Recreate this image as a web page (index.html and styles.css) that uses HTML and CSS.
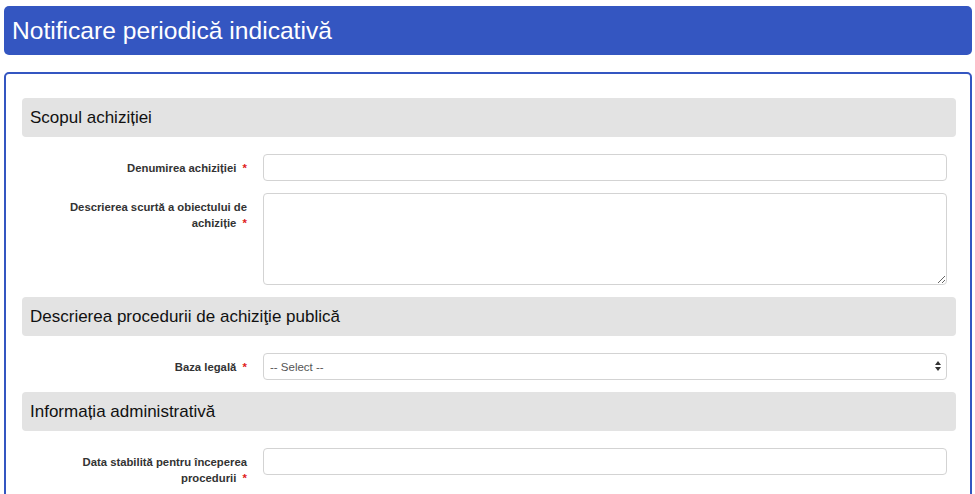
FILE: index.html
```html
<!DOCTYPE html>
<html lang="ro">
<head>
<meta charset="utf-8">
<title>Notificare periodică indicativă</title>
<link rel="stylesheet" href="styles.css">
</head>
<body>
<div class="page">
  <header class="page-header">
    <h1 class="page-title">Notificare periodică indicativă</h1>
  </header>
  <main class="card">
    <section class="section">
      <h2 class="section-title">Scopul achiziției</h2>
      <div class="form-row">
        <label class="form-label required" for="den">Denumirea achiziției</label>
        <div class="form-field"><input id="den" class="input" type="text"></div>
      </div>
      <div class="form-row">
        <label class="form-label required" for="desc">Descrierea scurtă a obiectului de achiziție</label>
        <div class="form-field"><textarea id="desc" class="input textarea"></textarea></div>
      </div>
    </section>
    <section class="section">
      <h2 class="section-title">Descrierea procedurii de achiziţie publică</h2>
      <div class="form-row">
        <label class="form-label required" for="baza">Baza legală</label>
        <div class="form-field select-wrap">
          <select id="baza" class="input select"><option>-- Select --</option></select>
          <svg class="select-arrows" width="8" height="12" viewBox="0 0 8 12"><path d="M4 1 L7 5 L1 5 Z M4 11 L7 7 L1 7 Z" fill="#333"/></svg>
        </div>
      </div>
    </section>
    <section class="section">
      <h2 class="section-title">Informația administrativă</h2>
      <div class="form-row">
        <label class="form-label required" for="data">Data stabilită pentru începerea procedurii</label>
        <div class="form-field"><input id="data" class="input" type="text"></div>
      </div>
    </section>
  </main>
</div>
</body>
</html>
```
FILE: styles.css
```css
* { box-sizing: border-box; }
html, body { margin: 0; padding: 0; background: #fff; }
body {
  font-family: "Liberation Sans", Arial, sans-serif;
  color: #333;
  overflow: hidden;
}
.page {
  padding: 6px 3px 0 4px;
}
.page-header {
  background: #3456c1;
  border-radius: 5px;
  height: 49px;
  display: flex;
  align-items: center;
  padding: 1px 8px 0;
}
.page-title {
  margin: 0;
  font-size: 24.6px;
  font-weight: 400;
  color: #fff;
}
.card {
  margin-top: 17px;
  border: 2px solid #3456c1;
  border-radius: 5px;
  padding: 24px 14px 40px 16px;
  min-height: 500px;
}
.section-title {
  margin: 0;
  background: #e3e3e3;
  border-radius: 4px;
  height: 39px;
  display: flex;
  align-items: center;
  padding: 0 8px;
  font-size: 17px;
  font-weight: 400;
  color: #111;
}
.section { margin-bottom: 12px; }
.section-title + .form-row { margin-top: 17px; }
.form-row {
  display: grid;
  grid-template-columns: 241px 1fr;
  margin-top: 12px;
}
.form-label {
  text-align: right;
  font-size: 11.3px;
  font-weight: 700;
  line-height: 16px;
  padding: 6px 16px 0 34px;
  color: #333;
}
.required::after {
  content: "\00a0\00a0*";
  color: #e0201b;
}
.form-field {
  padding-right: 9px;
}
.input {
  display: block;
  width: 100%;
  height: 27px;
  border: 1px solid #d3d3d3;
  border-radius: 4px;
  background: #fff;
  font-family: "Liberation Sans", Arial, sans-serif;
  font-size: 11.5px;
  color: #555;
  padding: 0 6px;
  margin: 0;
  outline: none;
}
.textarea {
  height: 92px;
  resize: vertical;
}
.select-wrap { position: relative; }
.select {
  -webkit-appearance: none;
  appearance: none;
}
.select-arrows {
  position: absolute;
  right: 14px;
  top: 7px;
}
```
